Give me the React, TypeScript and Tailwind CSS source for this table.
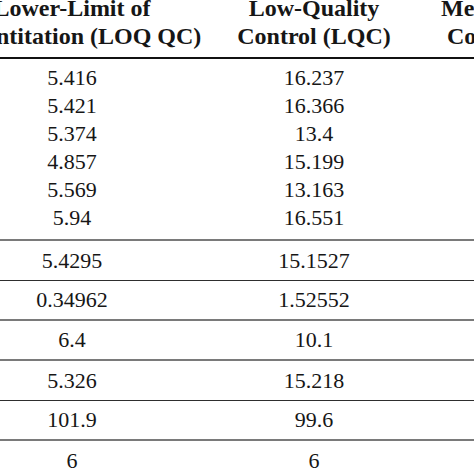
const group = [
  ["5.416", "16.237"],
  ["5.421", "16.366"],
  ["5.374", "13.4"],
  ["4.857", "15.199"],
  ["5.569", "13.163"],
  ["5.94", "16.551"],
];

// single-value rows below the replicate block, border class per row
const rows: { loq: string; lqc: string; line: string }[] = [
  { loq: "5.4295", lqc: "15.1527", line: "border-b border-[#2e2e2e]" },
  { loq: "0.34962", lqc: "1.52552", line: "border-b-2 border-[#7a7a7a]" },
  { loq: "6.4", lqc: "10.1", line: "border-b-2 border-[#7a7a7a]" },
  { loq: "5.326", lqc: "15.218", line: "border-b border-[#2e2e2e]" },
  { loq: "101.9", lqc: "99.6", line: "border-b-2 border-[#7a7a7a]" },
  { loq: "6", lqc: "6", line: "" },
];

export default function App() {
  return (
    <div className="w-[474px] h-[474px] overflow-hidden bg-white text-[#161616] font-[Liberation_Serif]">
      <div className="w-[666px] -ml-[48px] -mt-[6px]">
        {/* header */}
        <div className="grid grid-cols-[240px_244px_182px] text-[24px] leading-[28px] font-bold text-center whitespace-nowrap pb-[7px] border-b-2 border-[#111]">
          <div>
            Lower-Limit of
            <br />
            Quantitation (LOQ QC)
          </div>
          <div>
            Low-Quality
            <br />
            Control (LQC)
          </div>
          <div>
            Medium-Quality
            <br />
            Control (MQC)
          </div>
        </div>

        {/* replicates */}
        <div className="grid grid-cols-[240px_244px_182px] text-[22px] leading-[28px] text-center pt-[5px] pb-[7px] border-b-2 border-[#7a7a7a]">
          <div>
            {group.map((r) => (
              <div key={r[0]}>{r[0]}</div>
            ))}
          </div>
          <div>
            {group.map((r) => (
              <div key={r[1]}>{r[1]}</div>
            ))}
          </div>
          <div />
        </div>

        {rows.map((r, i) => (
          <div
            key={i}
            className={`grid grid-cols-[240px_244px_182px] h-[40px] items-center text-[22px] leading-[28px] text-center ${r.line}`}
          >
            <div>{r.loq}</div>
            <div>{r.lqc}</div>
            <div />
          </div>
        ))}
      </div>
    </div>
  );
}
